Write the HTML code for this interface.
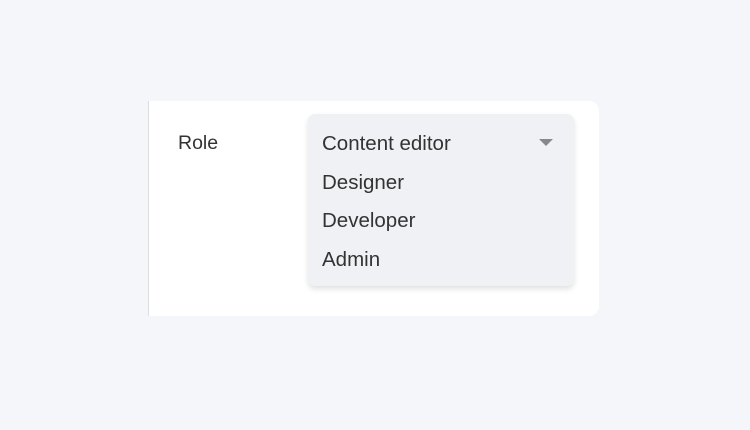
<!DOCTYPE html>
<html><head><style>
body{margin:0;width:750px;height:430px;background:#f5f6fa;font-family:"Liberation Sans",sans-serif;position:relative;overflow:hidden}
.card{position:absolute;left:148px;top:101px;width:451px;height:215px;background:#fff;border-radius:0 10px 10px 0;border-left:1px solid #dcdbe6;box-sizing:border-box}
.lbl{position:absolute;left:178px;top:132px;font-size:19.5px;color:#333;}
.dd{position:absolute;left:308px;top:114px;width:266px;height:172px;background:#f0f1f5;border-radius:7px;box-shadow:0 3px 6px rgba(0,0,0,0.12)}
.o{position:absolute;left:14px;font-size:20.5px;color:#333}
.arr{position:absolute;left:231px;top:25px;width:0;height:0;border-left:7px solid transparent;border-right:7px solid transparent;border-top:7px solid #888}
</style></head><body>
<div class="card"></div>
<div class="lbl">Role</div>
<div class="dd">
<div class="o" style="top:18px">Content editor</div>
<div class="arr"></div>
<div class="o" style="top:57px">Designer</div>
<div class="o" style="top:95px">Developer</div>
<div class="o" style="top:134px">Admin</div>
</div>
</body></html>
